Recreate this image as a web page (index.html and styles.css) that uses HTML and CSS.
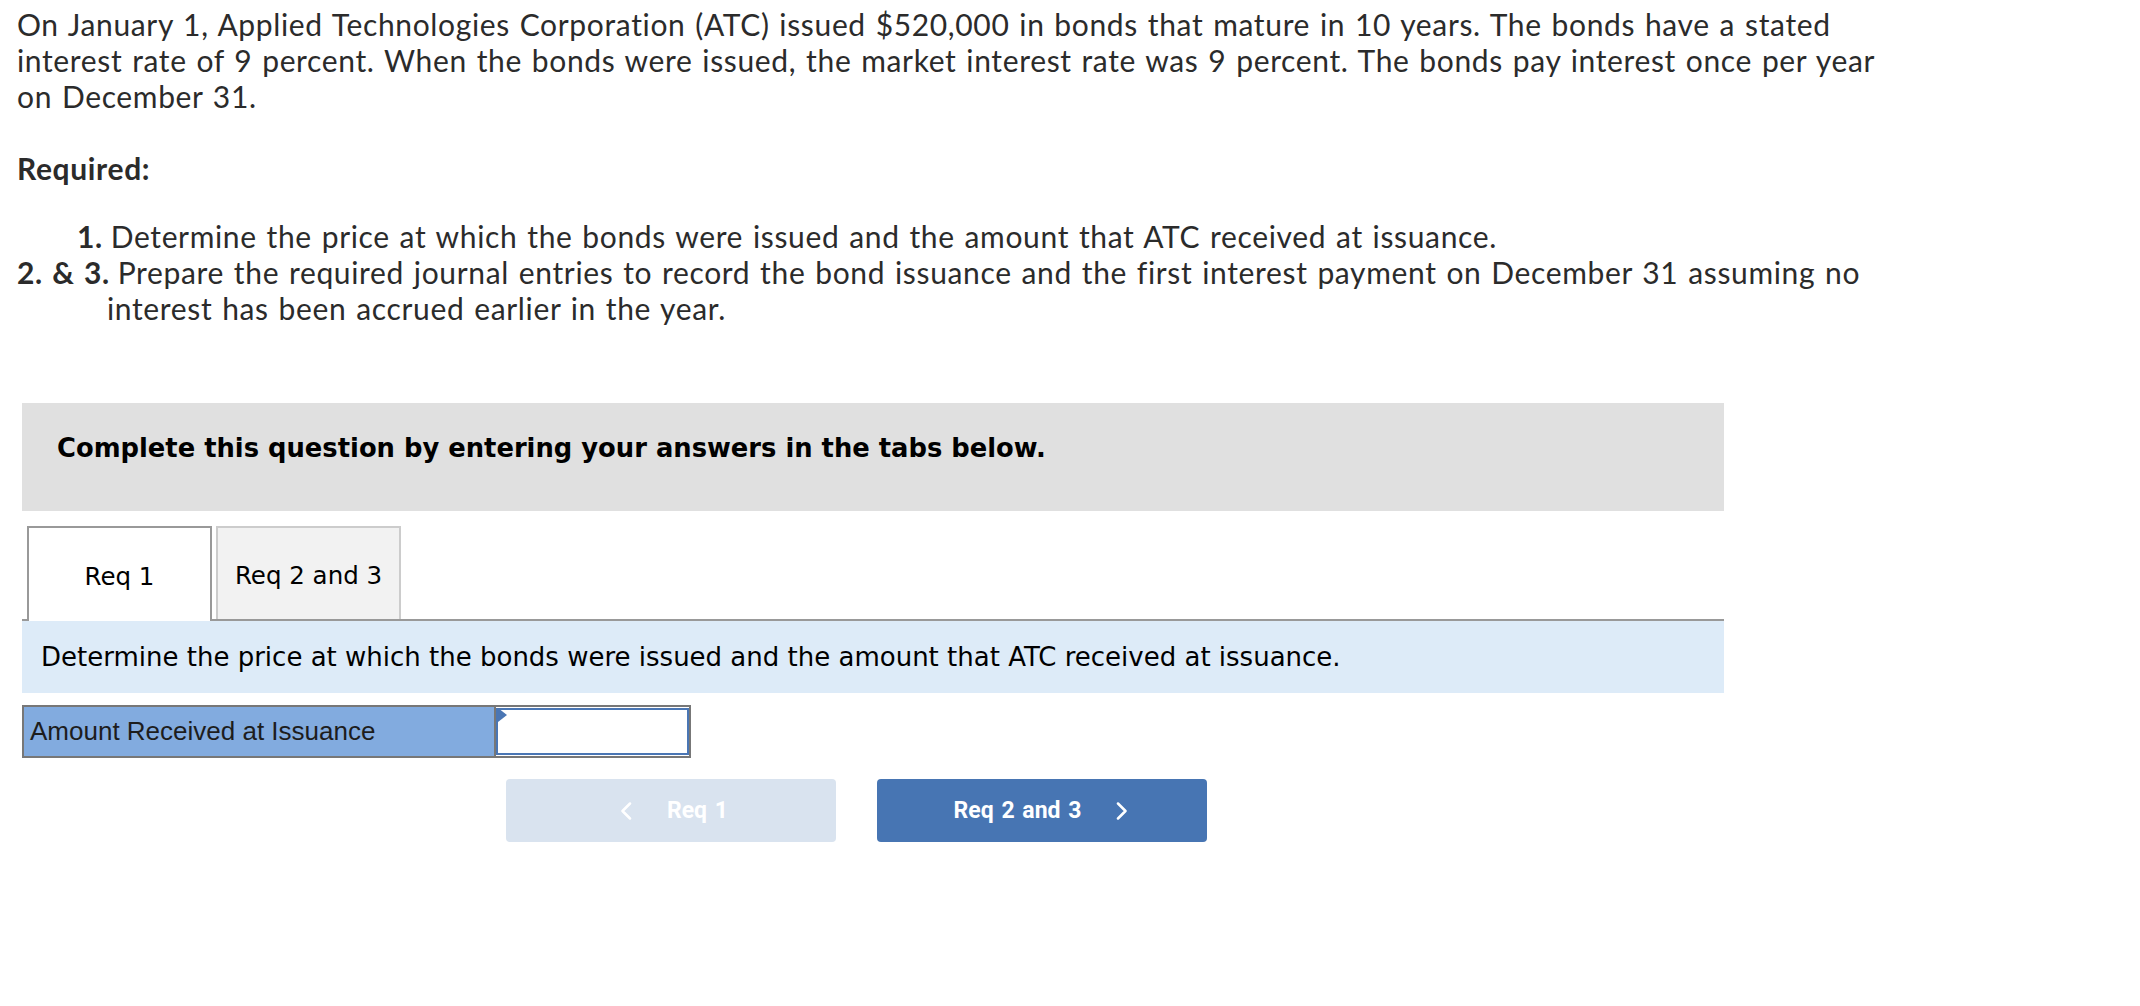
FILE: index.html
```html
<!DOCTYPE html>
<html lang="en">
<head>
<meta charset="utf-8">
<title>Bond issuance question</title>
<link rel="stylesheet" href="styles.css">
</head>
<body>
<div class="page">
  <div class="prompt">
    <p class="intro">On January 1, Applied Technologies Corporation (ATC) issued $520,000 in bonds that mature in 10 years. The bonds have a stated interest rate of 9 percent. When the bonds were issued, the market interest rate was 9 percent. The bonds pay interest once per year on December 31.</p>
    <p class="required">Required:</p>
    <p class="req req-one"><b>1.</b> Determine the price at which the bonds were issued and the amount that ATC received at issuance.</p>
    <p class="req req-two"><b>2. &amp; 3.</b> Prepare the required journal entries to record the bond issuance and the first interest payment on December 31 assuming no interest has been accrued earlier in the year.</p>
  </div>

  <div class="widget">
    <div class="banner">
      <h2>Complete this question by entering your answers in the tabs below.</h2>
    </div>

    <div class="tabs">
      <div class="tab tab-active">Req 1</div>
      <div class="tab">Req 2 and 3</div>
    </div>

    <div class="instruction">Determine the price at which the bonds were issued and the amount that ATC received at issuance.</div>

    <table class="answer">
      <tr>
        <td class="answer-label">Amount Received at Issuance</td>
        <td class="answer-cell"><span class="flag"></span><div class="answer-input"></div></td>
      </tr>
    </table>

    <div class="nav">
      <button class="nav-btn nav-prev" type="button">
        <svg class="chev" width="12" height="18" viewBox="0 0 12 18"><polyline points="10,1.5 2.5,9 10,16.5"/></svg>
        <span>Req 1</span>
      </button>
      <button class="nav-btn nav-next" type="button">
        <span>Req 2 and 3</span>
        <svg class="chev" width="12" height="18" viewBox="0 0 12 18"><polyline points="2,1.5 9.5,9 2,16.5"/></svg>
      </button>
    </div>
  </div>
</div>
</body>
</html>
```

FILE: styles.css
```css
* { box-sizing: border-box; }

html, body {
  margin: 0;
  padding: 0;
  background: #ffffff;
}

.page {
  width: 2140px;
  padding-top: 6px;
}

.prompt {
  padding-left: 17px;
  width: 1907px;
  font-family: "Lato", "Liberation Sans", sans-serif;
  font-size: 30px;
  line-height: 36px;
  letter-spacing: 0.65px;
  word-spacing: 1.5px;
  color: #2b2b2b;
}

.prompt p {
  margin: 0;
}

.required {
  margin-top: 36px !important;
  font-weight: 700;
}

.req {
  padding-left: 90px;
}

.req b {
  font-weight: 700;
  margin-right: -2px;
}

.req-one {
  margin-top: 32px !important;
  text-indent: -30px;
}

.req-two {
  text-indent: -90px;
}

/* ---------- widget ---------- */
.widget {
  margin-top: 77px;
  margin-left: 22px;
  width: 1702px;
  font-family: "DejaVu Sans", Verdana, sans-serif;
  color: #000;
}

.banner {
  height: 108px;
  background: #e0e0e0;
  padding: 30px 0 0 35px;
}

.banner h2 {
  margin: 0;
  font-size: 25.8px;
  line-height: 30px;
  font-weight: 700;
}

.tabs {
  display: flex;
  gap: 4px;
  margin-top: 15px;
  padding-left: 5px;
  border-bottom: 2px solid #999999;
  height: 95px;
}

.tab {
  width: 185px;
  height: 93px;
  display: flex;
  align-items: center;
  justify-content: center;
  padding-top: 4px;
  font-size: 24.5px;
  background: #f2f2f2;
  border: 2px solid #cccccc;
  border-bottom: none;
}

.tab-active {
  height: 95px;
  background: #ffffff;
  border-color: #999999;
  position: relative;
  z-index: 1;
}

.instruction {
  height: 72px;
  background: #ddebf8;
  padding: 21px 0 0 19px;
  font-size: 26px;
  line-height: 30px;
}

.answer {
  margin-top: 12px;
  border-collapse: collapse;
  width: 669px;
  height: 51px;
}

.answer td {
  border: 2px solid #777777;
  padding: 0;
  height: 51px;
}

.answer-label {
  width: 472px;
  background: #82abdf;
  font-family: "Liberation Sans", Arial, sans-serif;
  font-size: 26px;
  color: #1d1d1d;
  padding-left: 6px !important;
  vertical-align: middle;
}

.answer-cell {
  position: relative;
  background: #ffffff;
}

.answer-input {
  height: 47px;
  border: 2px solid #4a76b4;
}

.flag {
  position: absolute;
  left: 2px;
  top: 1px;
  width: 0;
  height: 0;
  border-left: 9px solid #4a76b4;
  border-top: 7px solid transparent;
  border-bottom: 7px solid transparent;
}

.nav {
  display: flex;
  gap: 41px;
  margin-top: 21px;
  padding-left: 484px;
}

.nav-btn {
  width: 330px;
  height: 63px;
  border: none;
  border-radius: 4px;
  display: flex;
  align-items: center;
  justify-content: center;
  gap: 35px;
  font-family: "Roboto", "Liberation Sans", sans-serif;
  font-weight: 700;
  font-size: 23px;
  word-spacing: 2px;
  color: #ffffff;
  padding: 0;
}

.nav-prev {
  background: #d9e3ef;
  padding-left: 6px;
}

.nav-next {
  background: #4775b3;
  padding-right: 2px;
}

.chev polyline {
  fill: none;
  stroke: #ffffff;
  stroke-width: 2.5;
  stroke-linecap: round;
  stroke-linejoin: round;
}
```
